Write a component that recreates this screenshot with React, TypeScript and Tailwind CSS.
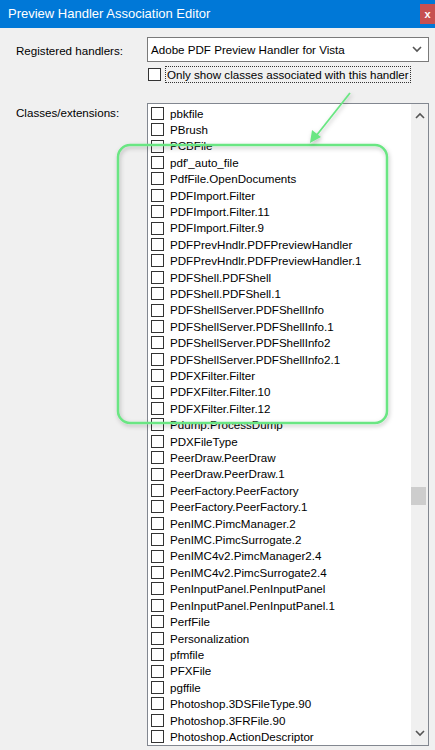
import React from 'react';

const classes = [
  'pbkfile',
  'PBrush',
  'PCBFile',
  "pdf'_auto_file",
  'PdfFile.OpenDocuments',
  'PDFImport.Filter',
  'PDFImport.Filter.11',
  'PDFImport.Filter.9',
  'PDFPrevHndlr.PDFPreviewHandler',
  'PDFPrevHndlr.PDFPreviewHandler.1',
  'PDFShell.PDFShell',
  'PDFShell.PDFShell.1',
  'PDFShellServer.PDFShellInfo',
  'PDFShellServer.PDFShellInfo.1',
  'PDFShellServer.PDFShellInfo2',
  'PDFShellServer.PDFShellInfo2.1',
  'PDFXFilter.Filter',
  'PDFXFilter.Filter.10',
  'PDFXFilter.Filter.12',
  'Pdump.ProcessDump',
  'PDXFileType',
  'PeerDraw.PeerDraw',
  'PeerDraw.PeerDraw.1',
  'PeerFactory.PeerFactory',
  'PeerFactory.PeerFactory.1',
  'PenIMC.PimcManager.2',
  'PenIMC.PimcSurrogate.2',
  'PenIMC4v2.PimcManager2.4',
  'PenIMC4v2.PimcSurrogate2.4',
  'PenInputPanel.PenInputPanel',
  'PenInputPanel.PenInputPanel.1',
  'PerfFile',
  'Personalization',
  'pfmfile',
  'PFXFile',
  'pgffile',
  'Photoshop.3DSFileType.90',
  'Photoshop.3FRFile.90',
  'Photoshop.ActionDescriptor',
];

const Chevron: React.FC<{ up?: boolean }> = ({ up }) => (
  <svg width="10" height="7" viewBox="0 0 10 7" className="block shrink-0">
    <path
      d={up ? 'M1 6 L5 2 L9 6' : 'M1 1 L5 5 L9 1'}
      fill="none"
      stroke="#555"
      strokeWidth="1.6"
    />
  </svg>
);

const Box: React.FC = () => (
  <span className="inline-block w-[13px] h-[13px] shrink-0 border border-[#333] bg-white" />
);

const App: React.FC = () => {
  return (
    <div
      className="relative w-[435px] h-[750px] overflow-hidden bg-[#f0f0f0] text-[#000] text-[11.6px]"
      style={{ fontFamily: '"Liberation Sans", Arial, sans-serif' }}
    >
      {/* title bar */}
      <div className="h-[28px] bg-[#0078d7] flex items-center justify-between">
        <span className="pl-[8px] text-white text-[13px] whitespace-nowrap">Preview Handler Association Editor</span>
        <div className="self-start mt-[4px] w-[15px] h-[20px] bg-[#c75050] flex items-center justify-center text-white text-[11px] font-bold">
          x
        </div>
      </div>

      <div className="pt-[9px] pr-[6px]">
        {/* handler picker */}
        <div className="flex h-[25px]">
          <div className="w-[147px] pl-[16px] pt-[5px] whitespace-nowrap">Registered handlers:</div>
          <div className="flex-1 h-[25px] border border-[#7a7a7a] bg-white flex items-center justify-between pl-[3px] pr-[6px]">
            <span className="whitespace-nowrap">Adobe PDF Preview Handler for Vista</span>
            <Chevron />
          </div>
        </div>

        <div className="flex mt-[4px] h-[17px]">
          <div className="w-[147px]" />
          <div className="flex items-center gap-[4px] pl-[1px]">
            <Box />
            <span className="border border-dotted border-[#333] px-[1px] leading-[15px] whitespace-nowrap">
              Only show classes associated with this handler
            </span>
          </div>
        </div>

        {/* class list */}
        <div className="flex mt-[20px]">
          <div className="w-[147px] pl-[16px] pt-[1px] whitespace-nowrap">Classes/extensions:</div>
          <div className="flex-1 h-[643px] border border-[#828790] bg-white flex">
            <div className="flex-1 pt-[1px] pl-[3px] overflow-hidden">
              {classes.map((name) => (
                <div key={name} className="h-[16.42px] flex items-center gap-[6px]">
                  <Box />
                  <span className="whitespace-nowrap">{name}</span>
                </div>
              ))}
            </div>
            <div className="w-[17px] bg-[#f0f0f0] flex flex-col items-center justify-between py-[8px]">
              <Chevron up />
              <div className="flex-1 w-full relative">
                <div className="absolute left-[0px] right-[2px] top-[368px] h-[18px] bg-[#cdcdcd]" />
              </div>
              <Chevron />
            </div>
          </div>
        </div>
      </div>

      {/* green callout drawn on top */}
      <svg className="absolute inset-0 pointer-events-none" width="435" height="750">
        <defs>
          <filter id="glow" x="-20%" y="-20%" width="140%" height="140%">
            <feDropShadow dx="1" dy="2" stdDeviation="2" floodColor="#000" floodOpacity="0.25" />
          </filter>
        </defs>
        <rect
          x="118"
          y="145"
          width="269"
          height="278"
          rx="12"
          fill="none"
          stroke="#6ae683"
          strokeWidth="2.5"
          filter="url(#glow)"
        />
        <g filter="url(#glow)">
          <line x1="350" y1="93" x2="316" y2="136" stroke="#6ae683" strokeWidth="1.8" />
          <polygon points="310,143 312,130 321,137" fill="#6ae683" />
        </g>
      </svg>
    </div>
  );
};

export default App;
